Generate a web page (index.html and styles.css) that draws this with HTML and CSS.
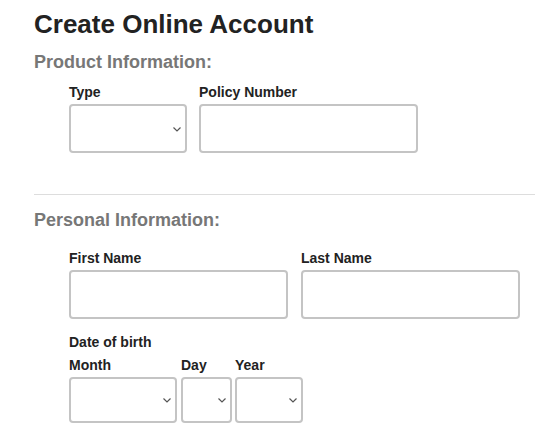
FILE: index.html
```html
<!DOCTYPE html>
<html lang="en">
<head>
<meta charset="utf-8">
<title>Create Online Account</title>
<link rel="stylesheet" href="styles.css">
</head>
<body>
<div class="page">
  <h1 class="title">Create Online Account</h1>
  <section class="section">
    <h2 class="section-title">Product Information:</h2>
    <div class="row row-product">
      <div class="field">
        <label class="label">Type</label>
        <div class="select-wrap w-type">
          <select class="select"><option></option></select>
          <svg class="chev" width="8" height="5" viewBox="0 0 8 5"><path d="M0.5 0.5 L4 4 L7.5 0.5" fill="none" stroke="#555" stroke-width="1.2"/></svg>
        </div>
      </div>
      <div class="field">
        <label class="label">Policy Number</label>
        <input class="input w-policy" type="text">
      </div>
    </div>
  </section>
  <hr class="divider">
  <section class="section">
    <h2 class="section-title section-title-2">Personal Information:</h2>
    <div class="row row-names">
      <div class="field">
        <label class="label">First Name</label>
        <input class="input w-name" type="text">
      </div>
      <div class="field">
        <label class="label">Last Name</label>
        <input class="input w-name" type="text">
      </div>
    </div>
    <div class="dob">
      <div class="label dob-title">Date of birth</div>
      <div class="row row-dob">
        <div class="field">
          <label class="label">Month</label>
          <div class="select-wrap w-month">
            <select class="select small"><option></option></select>
            <svg class="chev" width="8" height="5" viewBox="0 0 8 5"><path d="M0.5 0.5 L4 4 L7.5 0.5" fill="none" stroke="#555" stroke-width="1.2"/></svg>
          </div>
        </div>
        <div class="field">
          <label class="label">Day</label>
          <div class="select-wrap w-day">
            <select class="select small"><option></option></select>
            <svg class="chev" width="8" height="5" viewBox="0 0 8 5"><path d="M0.5 0.5 L4 4 L7.5 0.5" fill="none" stroke="#555" stroke-width="1.2"/></svg>
          </div>
        </div>
        <div class="field">
          <label class="label">Year</label>
          <div class="select-wrap w-year">
            <select class="select small"><option></option></select>
            <svg class="chev" width="8" height="5" viewBox="0 0 8 5"><path d="M0.5 0.5 L4 4 L7.5 0.5" fill="none" stroke="#555" stroke-width="1.2"/></svg>
          </div>
        </div>
      </div>
    </div>
  </section>
</div>
</body>
</html>
```
FILE: styles.css
```css
html, body {
  margin: 0;
  padding: 0;
  background: #fff;
}
body {
  font-family: "Liberation Sans", Arial, sans-serif;
  color: #222;
}
.page {
  padding: 8px 0 0 34px;
}
.title {
  margin: 0;
  font-size: 26px;
  line-height: 32px;
  font-weight: bold;
  color: #222;
}
.section-title {
  margin: 10px 0 0 0;
  font-size: 18px;
  line-height: 24px;
  font-weight: bold;
  color: #777;
}
.section-title-2 {
  margin-top: 13px;
}
.row {
  display: flex;
  gap: 12px;
  padding-left: 35px;
}
.row-product {
  margin-top: 10px;
}
.field {
  display: flex;
  flex-direction: column;
}
.label {
  display: block;
  font-size: 14px;
  line-height: 16px;
  font-weight: bold;
  color: #222;
  margin-bottom: 4px;
}
.input, .select {
  box-sizing: border-box;
  border: 2px solid #c4c4c4;
  border-radius: 4px;
  background: #fff;
  height: 49px;
  margin: 0;
  padding: 0 8px;
  font-family: inherit;
  font-size: 14px;
  outline: none;
}
.select {
  -webkit-appearance: none;
  appearance: none;
  width: 100%;
}
.select.small {
  height: 46px;
}
.select-wrap {
  position: relative;
}
.chev {
  position: absolute;
  right: 6px;
  top: 50%;
  margin-top: -2px;
  pointer-events: none;
}
.w-type { width: 118px; }
.w-policy { width: 219px; }
.w-name { width: 219px; }
.w-month { width: 108px; }
.w-day { width: 51px; }
.w-year { width: 68px; }
.divider {
  margin: 41px 0 0 0;
  border: 0;
  border-top: 1px solid #ddd;
  height: 0;
}
.row-names {
  gap: 13px;
  margin-top: 18px;
}
.dob {
  padding-left: 35px;
  margin-top: 15px;
}
.dob-title {
  margin-bottom: 7px;
}
.row-dob {
  padding-left: 0;
  gap: 3px;
}
.row-dob .field:first-child { margin-right: 1px; }
```
